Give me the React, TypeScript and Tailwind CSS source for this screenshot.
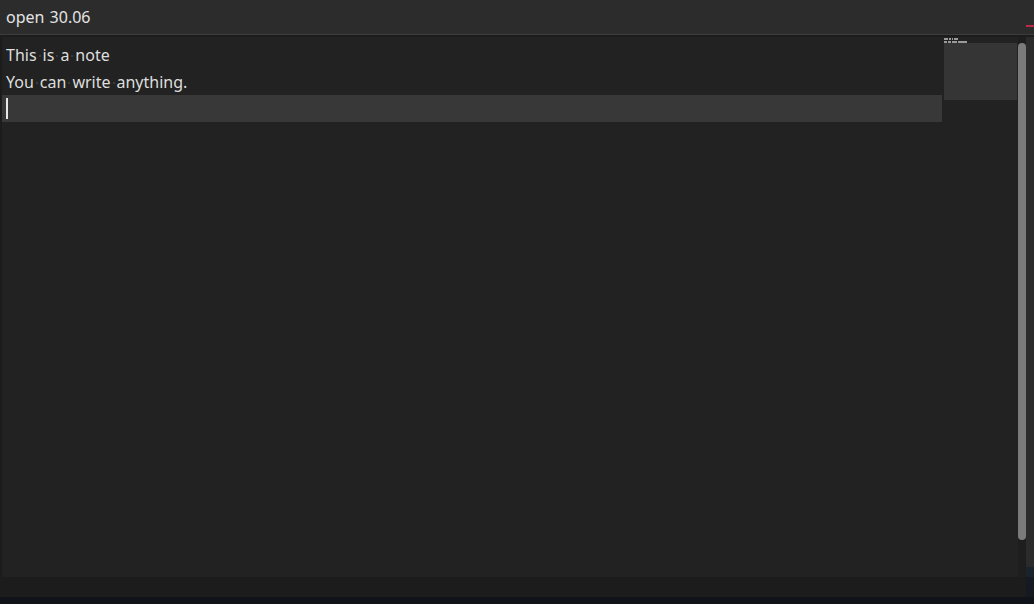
const lines = ["This is a note", "You can write anything.", ""];

function Line({ text }: { text: string }) {
  const words = text.split(" ");
  return (
    <>
      {words.map((w, i) => (
        <span key={i} className="flex items-center">
          {i > 0 && (
            <span className="flex h-full w-[6px] items-center justify-center pt-[2px]">
              <span className="h-[2px] w-[2px] rounded-full bg-[#454545]" />
            </span>
          )}
          {w}
        </span>
      ))}
    </>
  );
}

function Minimap() {
  return (
    <div className="relative ml-[2px] w-[73px] shrink-0">
      <div className="absolute left-0 top-0 flex flex-col gap-[1px] pt-[1px]">
        <div className="flex gap-[1px]">
          <div className="h-[2px] w-[4px] bg-[#9a9a9a]" />
          <div className="h-[2px] w-[2px] bg-[#9a9a9a]" />
          <div className="h-[2px] w-[1px] bg-[#9a9a9a]" />
          <div className="h-[2px] w-[4px] bg-[#9a9a9a]" />
        </div>
        <div className="flex gap-[1px]">
          <div className="h-[2px] w-[3px] bg-[#9a9a9a]" />
          <div className="h-[2px] w-[3px] bg-[#9a9a9a]" />
          <div className="h-[2px] w-[5px] bg-[#9a9a9a]" />
          <div className="h-[2px] w-[9px] bg-[#9a9a9a]" />
        </div>
      </div>
      <div className="mt-[6px] h-[57px] w-full bg-[#353535]" />
    </div>
  );
}

export default function App() {
  return (
    <div
      className="flex h-[604px] w-[1034px] flex-col overflow-hidden bg-[#10131a] text-[#dedede]"
      style={{ fontFamily: '"Noto Sans", "Open Sans", sans-serif' }}
    >
      <div className="flex h-[34px] shrink-0">
        <div className="flex flex-1 items-center bg-[#2c2c2c] px-[6px] text-[16px] text-[#e4e4e4] [word-spacing:1px]">
          open 30.06
        </div>
        <div className="flex w-[8px] flex-col bg-[#2c2c2c]">
          <div className="h-[25px]" />
          <div className="h-[2px] bg-[#c0284a]" />
        </div>
      </div>
      <div className="h-[1px] shrink-0 bg-[#3d3d3d]" />
      <div className="h-[2px] shrink-0 bg-[#1c1c1c]" />
      <div className="flex flex-1">
        <div className="flex flex-1 flex-col">
          <div className="flex flex-1 bg-[#1c1c1c] pl-[2px]">
            <div className="flex flex-1 bg-[#222222]">
              <div className="flex-1 pt-[4px]">
                {lines.map((line, i) => (
                  <div
                    key={i}
                    className={`flex h-[27px] items-center px-[4px] text-[16px] ${
                      i === 2 ? "bg-[#383838]" : ""
                    }`}
                  >
                    {line && <Line text={line} />}
                    {i === 2 && <div className="h-[21px] w-[1.5px] bg-[#e8e8e8]" />}
                  </div>
                ))}
              </div>
              <Minimap />
              <div className="w-[1px] bg-[#222222]" />
            </div>
          </div>
          <div className="h-[20px] bg-[#1c1c1c]" />
        </div>
        <div className="flex w-[16px] flex-col">
          <div className="flex h-[540px]">
            <div className="w-[8px] bg-[#1e1e1e] pt-[6px]">
              <div className="h-[497px] rounded-b-[4px] rounded-t-[4px] bg-[#7b7b7b]" />
            </div>
            <div className="flex w-[8px] flex-col bg-[#2b2b2b]">
              <div className="flex-1" />
              <div className="h-[10px] bg-[#1a222c]" />
            </div>
          </div>
          <div className="flex flex-1">
            <div className="w-[8px] bg-[#1c1c1c]" />
            <div className="w-[8px] bg-[#151a22]" />
          </div>
        </div>
      </div>
      <div className="h-[7px] shrink-0 bg-[#10131a]" />
    </div>
  );
}
